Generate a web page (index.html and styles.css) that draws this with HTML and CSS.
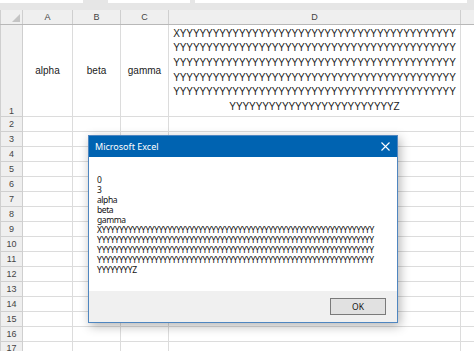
FILE: index.html
```html
<!DOCTYPE html>
<html lang="en">
<head>
    <meta charset="UTF-8">
    <meta name="viewport" content="width=device-width, initial-scale=1.0">
    <title>Microsoft Excel</title>
    <link rel="stylesheet" href="styles.css">
</head>
<body>

    <div class="topbar">
        <div class="box box-name"></div>
        <div class="box box-mid"></div>
        <div class="box box-formula"></div>
    </div>

    <table class="sheet">
        <colgroup>
            <col class="col-rh">
            <col class="col-a">
            <col class="col-b">
            <col class="col-c">
            <col class="col-d">
            <col class="col-e">
        </colgroup>
        <tr class="head-row">
            <th class="corner"><span class="select-all"></span></th>
            <th>A</th>
            <th>B</th>
            <th>C</th>
            <th>D</th>
            <th></th>
        </tr>
        <tr class="tall-row">
            <th class="rh rh-bottom">1</th>
            <td class="center">alpha</td>
            <td class="center">beta</td>
            <td class="center">gamma</td>
            <td class="center wrap">XYYYYYYYYYYYYYYYYYYYYYYYYYYYYYYYYYYYYYYYYYY<br>YYYYYYYYYYYYYYYYYYYYYYYYYYYYYYYYYYYYYYYYYYY<br>YYYYYYYYYYYYYYYYYYYYYYYYYYYYYYYYYYYYYYYYYYY<br>YYYYYYYYYYYYYYYYYYYYYYYYYYYYYYYYYYYYYYYYYYY<br>YYYYYYYYYYYYYYYYYYYYYYYYYYYYYYYYYYYYYYYYYYY<br>YYYYYYYYYYYYYYYYYYYYYYYYYZ</td>
            <td></td>
        </tr>
        <tr><th class="rh">2</th><td></td><td></td><td></td><td></td><td></td></tr>
        <tr><th class="rh">3</th><td></td><td></td><td></td><td></td><td></td></tr>
        <tr><th class="rh">4</th><td></td><td></td><td></td><td></td><td></td></tr>
        <tr><th class="rh">5</th><td></td><td></td><td></td><td></td><td></td></tr>
        <tr><th class="rh">6</th><td></td><td></td><td></td><td></td><td></td></tr>
        <tr><th class="rh">7</th><td></td><td></td><td></td><td></td><td></td></tr>
        <tr><th class="rh">8</th><td></td><td></td><td></td><td></td><td></td></tr>
        <tr><th class="rh">9</th><td></td><td></td><td></td><td></td><td></td></tr>
        <tr><th class="rh">10</th><td></td><td></td><td></td><td></td><td></td></tr>
        <tr><th class="rh">11</th><td></td><td></td><td></td><td></td><td></td></tr>
        <tr><th class="rh">12</th><td></td><td></td><td></td><td></td><td></td></tr>
        <tr><th class="rh">13</th><td></td><td></td><td></td><td></td><td></td></tr>
        <tr><th class="rh">14</th><td></td><td></td><td></td><td></td><td></td></tr>
        <tr><th class="rh">15</th><td></td><td></td><td></td><td></td><td></td></tr>
        <tr><th class="rh">16</th><td></td><td></td><td></td><td></td><td></td></tr>
        <tr class="last-row"><th class="rh">17</th><td></td><td></td><td></td><td></td><td></td></tr>
    </table>

    <div class="msgbox">
        <div class="msgbox-title">
            <span>Microsoft Excel</span>
            <svg class="close" width="9" height="9" viewBox="0 0 9 9">
                <path d="M0.5 0.5 L8.5 8.5 M8.5 0.5 L0.5 8.5" stroke="#fff" stroke-width="1.1" fill="none"/>
            </svg>
        </div>
        <div class="msgbox-body">
            <p class="msg">0<br>3<br>alpha<br>beta<br>gamma<br>XYYYYYYYYYYYYYYYYYYYYYYYYYYYYYYYYYYYYYYYYYYYYYYYYYYYYYYYYYYYYYY<br>YYYYYYYYYYYYYYYYYYYYYYYYYYYYYYYYYYYYYYYYYYYYYYYYYYYYYYYYYYYYYYY<br>YYYYYYYYYYYYYYYYYYYYYYYYYYYYYYYYYYYYYYYYYYYYYYYYYYYYYYYYYYYYYYY<br>YYYYYYYYYYYYYYYYYYYYYYYYYYYYYYYYYYYYYYYYYYYYYYYYYYYYYYYYYYYYYYY<br>YYYYYYYYZ</p>
        </div>
        <div class="msgbox-footer">
            <button class="ok-btn">OK</button>
        </div>
    </div>

</body>
</html>
```

FILE: styles.css
```css
body {
    margin: 0;
    width: 474px;
    height: 351px;
    overflow: hidden;
    position: relative;
    background: #fff;
    font-family: "Liberation Sans", Arial, sans-serif;
}

.topbar {
    height: 10px;
    background: #e6e6e6;
    display: flex;
    align-items: flex-start;
}

.box {
    height: 3px;
    background: #fff;
}

.box-name {
    width: 83px;
}

.box-mid {
    width: 82px;
    margin-left: 25px;
}

.box-formula {
    width: 272px;
    margin-left: 5px;
}

.sheet {
    border-collapse: collapse;
    table-layout: fixed;
    width: 480px;
    font-size: 10px;
    color: #1a1a1a;
}

.col-rh { width: 22px; }
.col-a { width: 50px; }
.col-b { width: 48px; }
.col-c { width: 48px; }
.col-d { width: 292px; }
.col-e { width: 20px; }

.sheet td {
    border: 1px solid #dcdcdc;
    padding: 0;
    height: 14px;
}

.sheet th {
    background: #efefef;
    border: 1px solid #cfcfcf;
    font-weight: normal;
    color: #444;
    font-size: 9px;
    padding: 0;
    height: 14px;
}

.head-row th {
    border-top: none;
    border-bottom: 1px solid #b8b8b8;
}

.corner {
    position: relative;
}

.select-all {
    position: absolute;
    right: 2px;
    bottom: 2px;
    width: 0;
    height: 0;
    border-left: 8px solid transparent;
    border-bottom: 8px solid #c4c4c4;
}

.rh {
    text-align: center;
    border-left: none;
    border-right: 1px solid #b8b8b8;
}

.rh-bottom {
    vertical-align: bottom;
}

.last-row th {
    vertical-align: top;
    line-height: 12px;
}

.tall-row td,
.tall-row th {
    height: 91px;
}

.center {
    text-align: center;
    vertical-align: middle;
}

.wrap {
    line-height: 14.6px;
    letter-spacing: -0.1px;
    white-space: nowrap;
    overflow: hidden;
}

.msgbox {
    position: absolute;
    left: 88px;
    top: 135px;
    width: 310px;
    height: 188px;
    border: 1px solid #4f86c0;
    box-sizing: border-box;
    background: #fff;
    box-shadow: 2px 3px 10px rgba(0, 0, 0, 0.3);
    display: flex;
    flex-direction: column;
    font-family: "Noto Sans", sans-serif;
}

.msgbox-title {
    height: 21px;
    background: #0063b1;
    color: #fff;
    font-size: 9px;
    display: flex;
    align-items: center;
    justify-content: space-between;
    padding: 0 7px 0 6px;
}

.close {
    display: block;
}

.msgbox-body {
    flex: 1;
    padding: 18px 0 0 8px;
}

.msg {
    margin: 0;
    font-size: 8.5px;
    line-height: 10px;
    color: #111;
    letter-spacing: -0.42px;
    white-space: nowrap;
}

.msgbox-footer {
    height: 31px;
    background: #f0f0f0;
    display: flex;
    justify-content: flex-end;
    align-items: flex-start;
    padding: 7px 11px 0 0;
    box-sizing: border-box;
}

.ok-btn {
    width: 56px;
    height: 17px;
    background: #e1e1e1;
    border: 1px solid #7a7a7a;
    font-family: "Noto Sans", sans-serif;
    font-size: 8.5px;
    color: #111;
    padding: 0;
}
```
